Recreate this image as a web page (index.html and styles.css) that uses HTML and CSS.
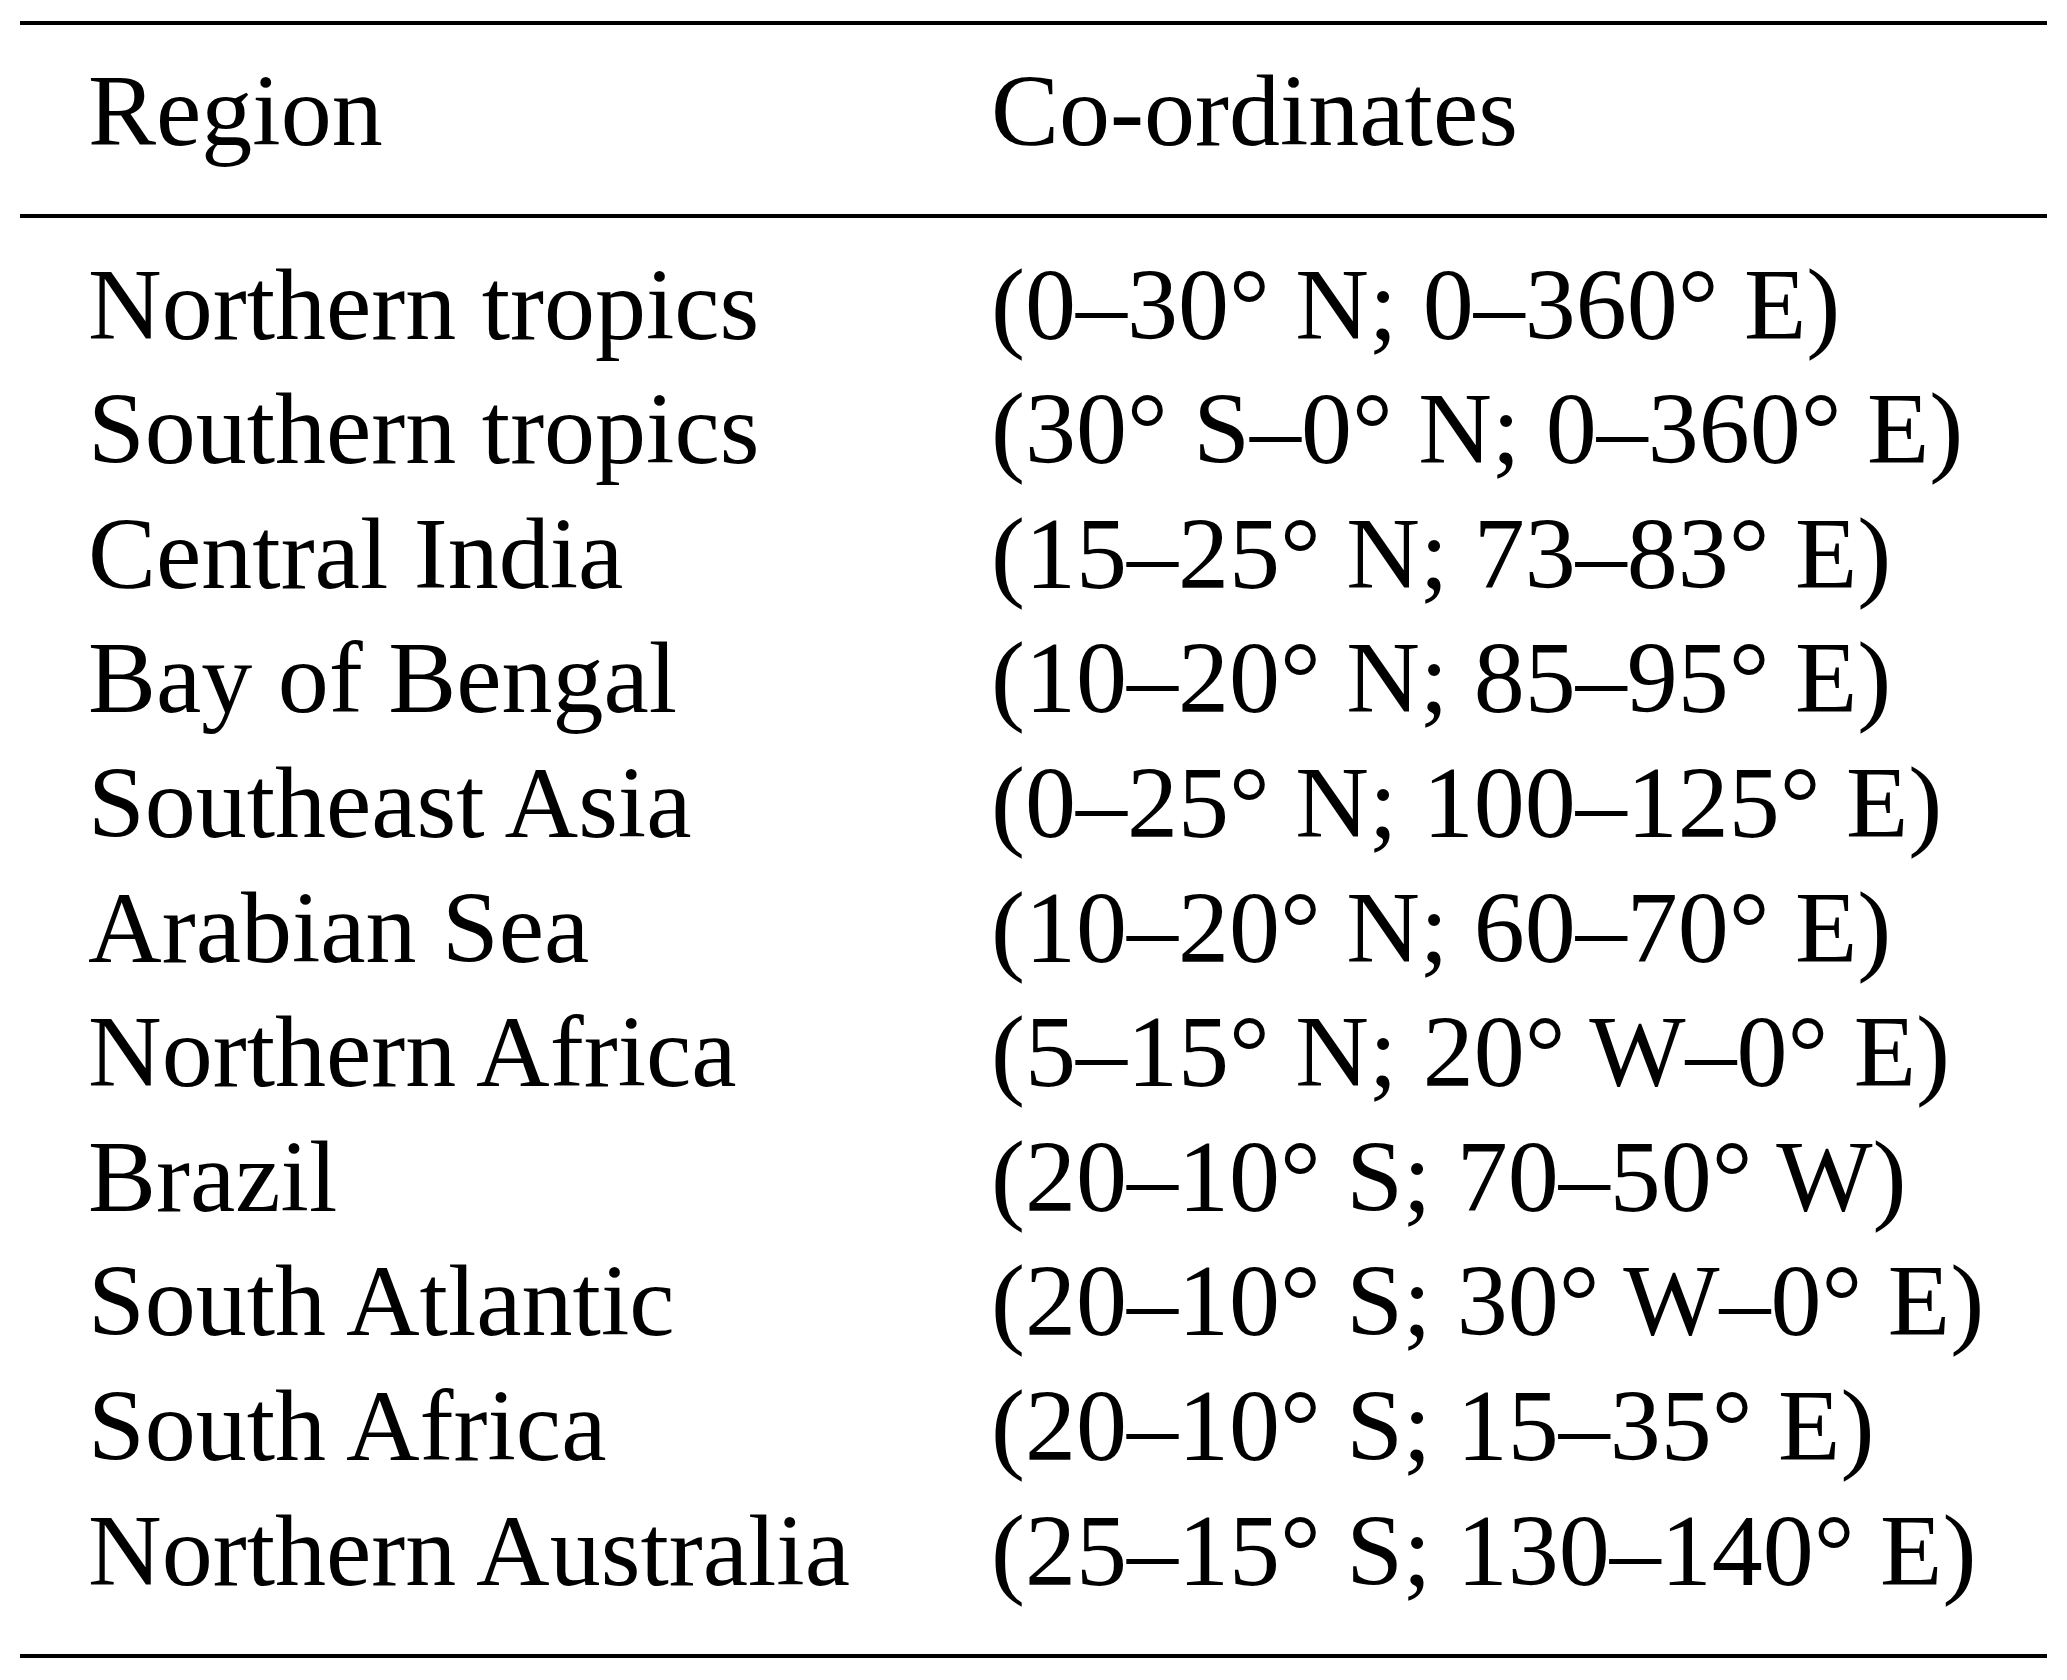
FILE: index.html
```html
<!DOCTYPE html>
<html lang="en">
<head>
    <meta charset="UTF-8">
    <title>Regions</title>
    <link rel="stylesheet" href="styles.css">
</head>
<body>
    <table class="regions">
        <colgroup>
            <col class="col-name">
            <col class="col-coords">
        </colgroup>
        <thead>
            <tr>
                <th>Region</th>
                <th>Co-ordinates</th>
            </tr>
        </thead>
        <tbody>
            <tr><td>Northern tropics</td><td>(0–30° N; 0–360° E)</td></tr>
            <tr><td>Southern tropics</td><td>(30° S–0° N; 0–360° E)</td></tr>
            <tr><td>Central India</td><td>(15–25° N; 73–83° E)</td></tr>
            <tr><td>Bay of Bengal</td><td>(10–20° N; 85–95° E)</td></tr>
            <tr><td>Southeast Asia</td><td>(0–25° N; 100–125° E)</td></tr>
            <tr><td>Arabian Sea</td><td>(10–20° N; 60–70° E)</td></tr>
            <tr><td>Northern Africa</td><td>(5–15° N; 20° W–0° E)</td></tr>
            <tr><td>Brazil</td><td>(20–10° S; 70–50° W)</td></tr>
            <tr><td>South Atlantic</td><td>(20–10° S; 30° W–0° E)</td></tr>
            <tr><td>South Africa</td><td>(20–10° S; 15–35° E)</td></tr>
            <tr><td>Northern Australia</td><td>(25–15° S; 130–140° E)</td></tr>
        </tbody>
    </table>
</body>
</html>
```

FILE: styles.css
```css
body {
    margin: 0;
    padding: 21px 20px 0;
    background: #fff;
    color: #000;
    font-family: "Liberation Serif", "Times New Roman", serif;
}
.regions {
    width: 2027px;
    table-layout: fixed;
    border-collapse: separate;
    border-spacing: 0;
    font-size: 102px;
    line-height: 124.6px;
}
.col-name {
    width: 971px;
}
.regions th,
.regions td {
    padding: 0;
    text-align: left;
    font-weight: normal;
    white-space: nowrap;
}
.regions th:first-child,
.regions td:first-child {
    padding-left: 68px;
}
.regions th {
    border-top: 4px solid #000;
    border-bottom: 4px solid #000;
    padding-top: 24px;
    padding-bottom: 40.4px;
}
.regions tbody tr:first-child td {
    padding-top: 24.6px;
}
.regions tbody tr:last-child td {
    padding-bottom: 41px;
    border-bottom: 4.5px solid #000;
}
```
